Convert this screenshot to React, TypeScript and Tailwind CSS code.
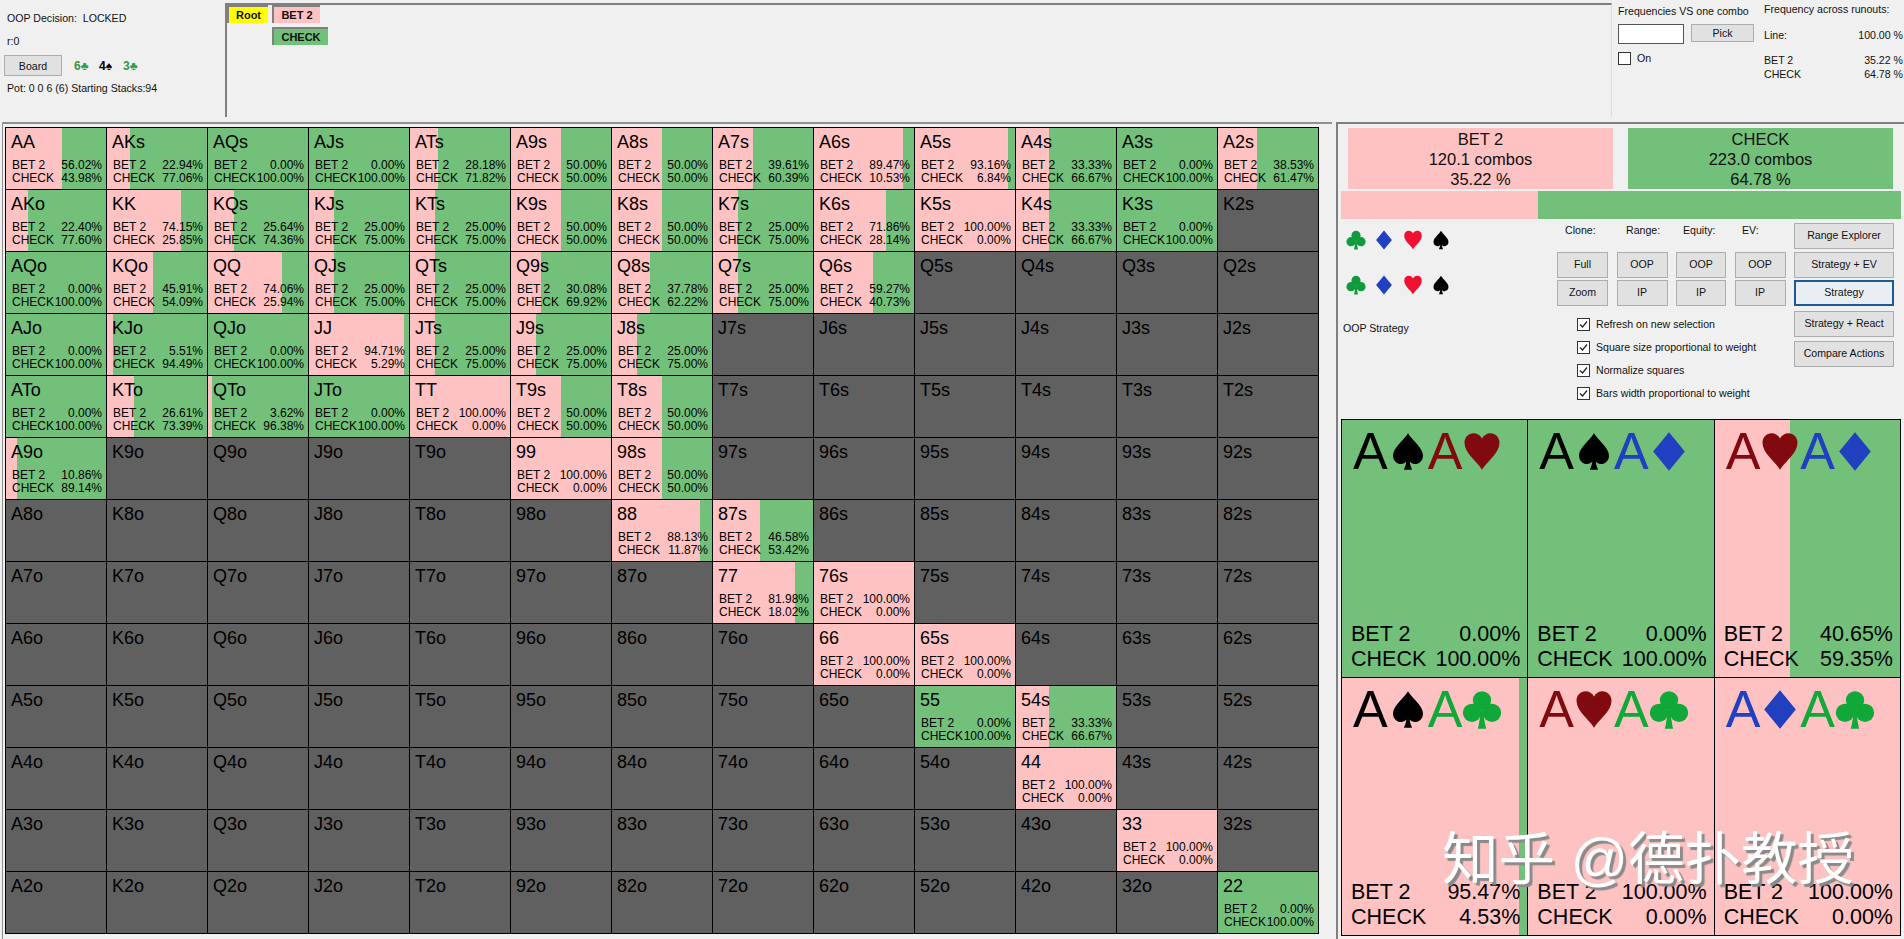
import React from "react";

const PINK = "#ffc2c2";
const GREEN = "#72c07a";

type Cell = [string, number?, number?];
const rows: Cell[][] = [
  [["AA",56.02,43.98],["AKs",22.94,77.06],["AQs",0,100],["AJs",0,100],["ATs",28.18,71.82],["A9s",50,50],["A8s",50,50],["A7s",39.61,60.39],["A6s",89.47,10.53],["A5s",93.16,6.84],["A4s",33.33,66.67],["A3s",0,100],["A2s",38.53,61.47]],
  [["AKo",22.4,77.6],["KK",74.15,25.85],["KQs",25.64,74.36],["KJs",25,75],["KTs",25,75],["K9s",50,50],["K8s",50,50],["K7s",25,75],["K6s",71.86,28.14],["K5s",100,0],["K4s",33.33,66.67],["K3s",0,100],["K2s"]],
  [["AQo",0,100],["KQo",45.91,54.09],["QQ",74.06,25.94],["QJs",25,75],["QTs",25,75],["Q9s",30.08,69.92],["Q8s",37.78,62.22],["Q7s",25,75],["Q6s",59.27,40.73],["Q5s"],["Q4s"],["Q3s"],["Q2s"]],
  [["AJo",0,100],["KJo",5.51,94.49],["QJo",0,100],["JJ",94.71,5.29],["JTs",25,75],["J9s",25,75],["J8s",25,75],["J7s"],["J6s"],["J5s"],["J4s"],["J3s"],["J2s"]],
  [["ATo",0,100],["KTo",26.61,73.39],["QTo",3.62,96.38],["JTo",0,100],["TT",100,0],["T9s",50,50],["T8s",50,50],["T7s"],["T6s"],["T5s"],["T4s"],["T3s"],["T2s"]],
  [["A9o",10.86,89.14],["K9o"],["Q9o"],["J9o"],["T9o"],["99",100,0],["98s",50,50],["97s"],["96s"],["95s"],["94s"],["93s"],["92s"]],
  [["A8o"],["K8o"],["Q8o"],["J8o"],["T8o"],["98o"],["88",88.13,11.87],["87s",46.58,53.42],["86s"],["85s"],["84s"],["83s"],["82s"]],
  [["A7o"],["K7o"],["Q7o"],["J7o"],["T7o"],["97o"],["87o"],["77",81.98,18.02],["76s",100,0],["75s"],["74s"],["73s"],["72s"]],
  [["A6o"],["K6o"],["Q6o"],["J6o"],["T6o"],["96o"],["86o"],["76o"],["66",100,0],["65s",100,0],["64s"],["63s"],["62s"]],
  [["A5o"],["K5o"],["Q5o"],["J5o"],["T5o"],["95o"],["85o"],["75o"],["65o"],["55",0,100],["54s",33.33,66.67],["53s"],["52s"]],
  [["A4o"],["K4o"],["Q4o"],["J4o"],["T4o"],["94o"],["84o"],["74o"],["64o"],["54o"],["44",100,0],["43s"],["42s"]],
  [["A3o"],["K3o"],["Q3o"],["J3o"],["T3o"],["93o"],["83o"],["73o"],["63o"],["53o"],["43o"],["33",100,0],["32s"]],
  [["A2o"],["K2o"],["Q2o"],["J2o"],["T2o"],["92o"],["82o"],["72o"],["62o"],["52o"],["42o"],["32o"],["22",0,100]],
];

const split = (p: number) => ({ background: `linear-gradient(to right, ${PINK} ${p}%, ${GREEN} ${p}%)` });

type SuitName = "s" | "h" | "d" | "c";
function Suit({ s, className }: { s: SuitName; className: string }) {
  return (
    <svg viewBox="0 0 24 24" className={className} fill="currentColor">
      {s === "s" && <path d="M12 1C9 6 3 9.5 3 14.5c0 3 2.3 5 4.8 5 1.4 0 2.5-.5 3.2-1.5-.2 2-.9 3.5-1.5 5h5c-.6-1.5-1.3-3-1.5-5 .7 1 1.8 1.5 3.2 1.5 2.5 0 4.8-2 4.8-5C21 9.5 15 6 12 1z" />}
      {s === "h" && <path d="M12 23C9 18 1.5 13 1.5 6.8 1.5 3.3 4 1 7 1c2 0 4 1.2 5 3.2C13 2.2 15 1 17 1c3 0 5.5 2.3 5.5 5.8C22.5 13 15 18 12 23z" />}
      {s === "d" && <path d="M12 .5 21.5 12 12 23.5 2.5 12z" />}
      {s === "c" && (
        <>
          <circle cx="12" cy="6.5" r="5.5" />
          <circle cx="6" cy="14" r="5.5" />
          <circle cx="18" cy="14" r="5.5" />
          <path d="M11 11h2c0 5 .5 9 1.5 12.5h-5C10.5 20 11 16 11 11z" />
        </>
      )}
    </svg>
  );
}

function GridCell({ c }: { c: Cell }) {
  const [name, bet, check] = c;
  const has = bet !== undefined;
  return (
    <div
      className={`h-[62px] w-[101px] border-r border-b border-black pl-[6px] pr-[4px] text-black ${has ? "" : "bg-[#606060]"}`}
      style={has ? split(bet as number) : undefined}
    >
      <div className="-ml-[1px] h-[31px] pt-[2px] text-[18px] leading-[25px]">{name}</div>
      {has && (
        <div className="text-[12px] leading-[13px]">
          <div className="flex justify-between whitespace-nowrap"><span>BET 2</span><span>{(bet as number).toFixed(2)}%</span></div>
          <div className="flex justify-between whitespace-nowrap"><span>CHECK</span><span>{(check as number).toFixed(2)}%</span></div>
        </div>
      )}
    </div>
  );
}

const suitColor: Record<SuitName, string> = {
  s: "text-black",
  h: "text-[#800a10]",
  d: "text-[#2040c0]",
  c: "text-[#10a838]",
};

function BigCard({ a, b, bet, check }: { a: SuitName; b: SuitName; bet: number; check: number }) {
  return (
    <div className="flex h-[258px] flex-col justify-between border-r border-b border-black pl-[9px] pr-[7px] pb-[5px] pt-[1px] text-black" style={split(bet)}>
      <div className="flex h-[60px] items-center pl-[2px] text-[52px] leading-[60px]">
        <span className={suitColor[a]}>A</span>
        <Suit s={a} className={`${suitColor[a]} h-[41px] w-[40px]`} />
        <span className={suitColor[b]}>A</span>
        <Suit s={b} className={`${suitColor[b]} h-[41px] w-[40px]`} />
      </div>
      <div className="text-[21.5px] leading-[25px]">
        <div className="flex justify-between whitespace-nowrap"><span>BET 2</span><span>{bet.toFixed(2)}%</span></div>
        <div className="flex justify-between whitespace-nowrap"><span>CHECK</span><span>{check.toFixed(2)}%</span></div>
      </div>
    </div>
  );
}

function Btn({ children, className = "" }: { children: React.ReactNode; className?: string }) {
  return (
    <div className={`flex items-center justify-center border border-[#adadad] bg-[#e1e1e1] text-[10.6px] text-[#111] ${className}`}>
      {children}
    </div>
  );
}

function CheckRow({ label }: { label: string }) {
  return (
    <div className="flex h-[23px] items-center text-[10.6px] text-[#111]">
      <div className="mr-[6px] flex h-[13px] w-[13px] items-center justify-center border border-[#333] bg-white">
        <svg viewBox="0 0 11 11" className="h-[11px] w-[11px]" fill="none" stroke="#222" strokeWidth="1.2"><path d="M2 5.5 4.5 8 9 2.5" /></svg>
      </div>
      {label}
    </div>
  );
}

const SuitRow = () => (
  <div className="flex items-center">
    <Suit s="c" className="h-[20px] w-[20px] text-[#109a3c]" />
    <Suit s="d" className="ml-[8px] h-[20px] w-[20px] text-[#2040c0]" />
    <Suit s="h" className="ml-[9px] h-[20px] w-[20px] text-[#f01030]" />
    <Suit s="s" className="ml-[8px] h-[20px] w-[20px] text-black" />
  </div>
);

export default function App() {
  return (
    <div className="relative h-[939px] w-[1904px] overflow-hidden bg-[#f0f0f0] font-['Liberation_Sans','Noto_Sans_CJK_SC',sans-serif] text-[#111]">
      {/* top band */}
      <div className="flex h-[122px]">
        <div className="w-[225px] shrink-0 text-[10.6px] leading-[14px]">
          <div className="pl-[7px] pt-[11px]">OOP Decision:&nbsp; LOCKED</div>
          <div className="pl-[7px] pt-[9px]">r:0</div>
          <div className="mt-[7px] flex items-center pl-[4px]">
            <Btn className="h-[21px] w-[58px]">Board</Btn>
            <span className="ml-[12px] w-[25px] text-[12px] font-bold text-[#2f9a4a]">6♣</span>
            <span className="w-[24px] text-[12px] font-bold text-black">4♠</span>
            <span className="text-[12px] font-bold text-[#2f9a4a]">3♣</span>
          </div>
          <div className="pl-[7px] pt-[5px]">Pot: 0 0 6 (6) Starting Stacks:94</div>
        </div>
        <div className="mt-[3px] h-[114px] w-[1387px] shrink-0 border-t-2 border-l-2 border-r border-[#808080] border-r-[#dcdcdc] text-[11px] font-bold">
          <div className="flex">
            <div className="flex h-[18px] w-[41px] items-center justify-center border-t-2 border-l-2 border-[#808080] bg-[#ffff00]">Root</div>
            <div className="ml-[4px] flex h-[18px] w-[48px] items-center justify-center border-t-2 border-l-2 border-[#808080] bg-[#ffc2c2]">BET 2</div>
          </div>
          <div className="ml-[45px] mt-[4px] flex h-[18px] w-[56px] items-center justify-center border-t-2 border-l-2 border-[#808080] bg-[#72c07a]">CHECK</div>
        </div>
        <div className="ml-[6px] w-[146px] shrink-0 pt-[4px] text-[10.6px] leading-[14px]">
          <div>Frequencies VS one combo</div>
          <div className="mt-[6px] flex">
            <div className="h-[20px] w-[66px] border border-[#555] bg-white" />
            <Btn className="ml-[7px] h-[18px] w-[63px]">Pick</Btn>
          </div>
          <div className="mt-[7px] flex items-center">
            <div className="h-[13px] w-[13px] border border-[#333] bg-white" />
            <span className="ml-[6px]">On</span>
          </div>
        </div>
        <div className="w-[139px] shrink-0 pt-[2px] text-[10.6px] leading-[14px]">
          <div>Frequency across runouts:</div>
          <div className="mt-[12px] flex justify-between"><span>Line:</span><span>100.00 %</span></div>
          <div className="mt-[11px] flex justify-between"><span>BET 2</span><span>35.22 %</span></div>
          <div className="flex justify-between"><span>CHECK</span><span>64.78 %</span></div>
        </div>
      </div>

      {/* main */}
      <div className="flex">
        <div className="ml-[2px] h-[817px] w-[1330px] shrink-0 border-t-2 border-l border-[#909090] pl-[2px] pt-[3px]">
          <div className="w-[1314px] border-t border-l border-black">
            {rows.map((r, i) => (
              <div key={i} className="flex">
                {r.map((c) => <GridCell key={c[0]} c={c} />)}
              </div>
            ))}
          </div>
        </div>
        <div className="ml-[4px] h-[817px] w-[568px] shrink-0 border-t-2 border-l-2 border-[#808080] pl-[3px] pt-[4px]">
          <div className="flex pl-[7px]">
            <div className="flex h-[61px] w-[265px] flex-col items-center justify-center bg-[#ffc2c2] text-[16.5px] leading-[20px]">
              <div>BET 2</div><div>120.1 combos</div><div>35.22 %</div>
            </div>
            <div className="ml-[15px] flex h-[61px] w-[265px] flex-col items-center justify-center bg-[#72c07a] text-[16.5px] leading-[20px]">
              <div>CHECK</div><div>223.0 combos</div><div>64.78 %</div>
            </div>
          </div>
          <div className="mt-[2px] flex h-[28px] w-[560px]">
            <div className="h-full w-[197px] bg-[#ffc2c2]" />
            <div className="h-full flex-1 bg-[#72c07a]" />
          </div>
          <div className="mt-[4px] flex h-[196px]">
            <div className="w-[216px] shrink-0 pl-[5px] pt-[7px]">
              <SuitRow />
              <div className="mt-[25px]"><SuitRow /></div>
              <div className="-ml-[3px] mt-[26px] text-[10.6px] leading-[14px]">OOP Strategy</div>
            </div>
            <div className="w-[237px] shrink-0">
              <div className="flex h-[29px] items-start text-[10.6px] leading-[14px]">
                <span className="ml-[8px] w-[61px]">Clone:</span>
                <span className="w-[57px]">Range:</span>
                <span className="w-[59px]">Equity:</span>
                <span>EV:</span>
              </div>
              <div className="grid grid-cols-[51px_51px_50px_51px] gap-x-[8.5px] gap-y-[2px]">
                {["Full","OOP","OOP","OOP","Zoom","IP","IP","IP"].map((t, i) => (
                  <Btn key={i} className="h-[26px]">{t}</Btn>
                ))}
              </div>
              <div className="mt-[7px] pl-[20px]">
                <CheckRow label="Refresh on new selection" />
                <CheckRow label="Square size proportional to weight" />
                <CheckRow label="Normalize squares" />
                <CheckRow label="Bars width proportional to weight" />
              </div>
            </div>
            <div className="flex w-[100px] shrink-0 flex-col">
              <Btn className="h-[26px]">Range Explorer</Btn>
              <Btn className="mt-[3px] h-[26px]">Strategy + EV</Btn>
              <div className="mt-[2px] flex h-[26px] items-center justify-center border-2 border-[#1c5a96] bg-[#e8eef4] text-[10.6px]">Strategy</div>
              <Btn className="mt-[5px] h-[26px]">Strategy + React</Btn>
              <Btn className="mt-[4px] h-[26px]">Compare Actions</Btn>
            </div>
          </div>
          <div className="grid w-[560px] grid-cols-3 border-t border-l border-black">
            <BigCard a="s" b="h" bet={0} check={100} />
            <BigCard a="s" b="d" bet={0} check={100} />
            <BigCard a="h" b="d" bet={40.65} check={59.35} />
            <BigCard a="s" b="c" bet={95.47} check={4.53} />
            <BigCard a="h" b="c" bet={100} check={0} />
            <BigCard a="d" b="c" bet={100} check={0} />
          </div>
        </div>
      </div>

      {/* watermark */}
      <div className="absolute left-[1442px] top-[827px] whitespace-nowrap text-[56.5px] leading-[66px] text-white [text-shadow:3px_3px_1px_#8a8a8a]">
        知乎 @德扑教授
      </div>
    </div>
  );
}
